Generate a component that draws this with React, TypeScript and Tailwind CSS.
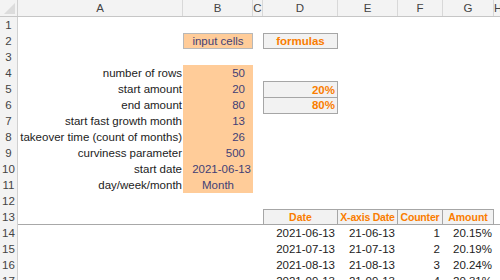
import React from 'react';

const cols = 'grid grid-cols-[18px_165px_70px_10px_75px_60px_45px_51px_1fr]';

const letters = ['A', 'B', 'C', 'D', 'E', 'F', 'G', 'H'];

const inputs: [string, string][] = [
  ['number of rows', '50'],
  ['start amount', '20'],
  ['end amount', '80'],
  ['start fast growth month', '13'],
  ['takeover time (count of months)', '26'],
  ['curviness parameter', '500'],
  ['start date', '2021-06-13'],
  ['day/week/month', 'Month'],
];

const data = [
  ['2021-06-13', '21-06-13', '1', '20.15%'],
  ['2021-07-13', '21-07-13', '2', '20.19%'],
  ['2021-08-13', '21-08-13', '3', '20.24%'],
  ['2021-09-13', '21-09-13', '4', '20.31%'],
];

function RowNum({ n }: { n: number }) {
  return (
    <div className="h-[16px] bg-[#f3f3f3] border-r border-[#d0d0d0] text-center text-[#444] leading-[16px]">
      {n}
    </div>
  );
}

function Row({ n, children }: { n: number; children?: React.ReactNode }) {
  return (
    <div className={`${cols} h-[16px] leading-[16px]`}>
      <RowNum n={n} />
      {children}
    </div>
  );
}

const calc = 'bg-[#f2f2f2] border-[#a6a6a6] text-[#fa7d00] font-bold';

export default function App() {
  return (
    <div className="w-[500px] h-[280px] overflow-hidden bg-white text-[11.5px] text-[#222] font-['Liberation_Sans',Arial,sans-serif]">
      {/* column headers */}
      <div className={`${cols} h-[17px] bg-[#f3f3f3] border-b border-[#c6c6c6] text-[#444] leading-[16px]`}>
        <div className="relative border-r border-[#d0d0d0]">
          <div className="absolute right-[2px] bottom-[2px] w-0 h-0 border-l-[11px] border-l-transparent border-b-[11px] border-b-[#dcdcdc]" />
        </div>
        {letters.map((l, i) => (
          <div key={l} className={`text-center ${i < 7 ? 'border-r border-[#d8d8d8]' : ''}`}>
            {l}
          </div>
        ))}
      </div>

      <Row n={1} />
      <Row n={2}>
        <div />
        <div className="bg-[#ffcc99] border border-[#b8b8b8] text-[#3f3f76] text-center leading-[14px]">input cells</div>
        <div />
        <div className={`${calc} border text-center leading-[14px]`}>formulas</div>
      </Row>
      <Row n={3} />
      {inputs.map(([label, value], i) => (
        <Row key={label} n={i + 4}>
          <div className="text-right pr-[1px] whitespace-nowrap">{label}</div>
          <div
            className={`bg-[#ffcc99] text-[#3f3f76] ${i < 7 ? 'border-b border-[#fbe0c6]' : ''} ${
              i === 7 ? 'text-center' : i === 6 ? 'text-right pr-[2px]' : 'text-right pr-[8px]'
            }`}
          >
            {value}
          </div>
          <div />
          {i === 1 && <div className={`${calc} border border-b-0 text-right pr-[2px]`}>20%</div>}
          {i === 2 && <div className={`${calc} border text-right pr-[2px] leading-[14px]`}>80%</div>}
        </Row>
      ))}
      <Row n={12} />
      <div className={`${cols} h-[16px] leading-[14px] border-b border-[#a8a8a8]`}>
        <RowNum n={13} />
        <div />
        <div />
        <div />
        <div className={`${calc} border text-center text-[10.5px]`}>Date</div>
        <div className={`${calc} border border-l-0 text-center whitespace-nowrap text-[10.5px] tracking-[-0.2px]`}>X-axis Date</div>
        <div className={`${calc} border border-l-0 text-center text-[10.5px] tracking-[-0.2px]`}>Counter</div>
        <div className={`${calc} border border-l-0 text-center text-[10.5px]`}>Amount</div>
      </div>
      {data.map((r, i) => (
        <Row key={r[0]} n={i + 14}>
          <div />
          <div />
          <div />
          <div className="text-right pr-[3px]">{r[0]}</div>
          <div className="text-right pr-[3px]">{r[1]}</div>
          <div className="text-right pr-[3px]">{r[2]}</div>
          <div className="text-right pr-[2px]">{r[3]}</div>
        </Row>
      ))}
    </div>
  );
}
